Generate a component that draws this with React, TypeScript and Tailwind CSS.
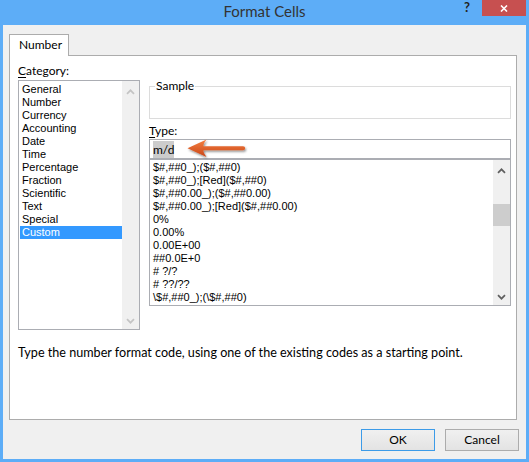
const categories = [
  "General",
  "Number",
  "Currency",
  "Accounting",
  "Date",
  "Time",
  "Percentage",
  "Fraction",
  "Scientific",
  "Text",
  "Special",
  "Custom",
];

const formats = [
  "$#,##0_);($#,##0)",
  "$#,##0_);[Red]($#,##0)",
  "$#,##0.00_);($#,##0.00)",
  "$#,##0.00_);[Red]($#,##0.00)",
  "0%",
  "0.00%",
  "0.00E+00",
  "##0.0E+0",
  "# ?/?",
  "# ??/??",
  "\\$#,##0_);(\\$#,##0)",
];

function Chevron({ down, color }: { down?: boolean; color: string }) {
  return (
    <svg width="9" height="6" viewBox="0 0 9 6">
      <path
        d={down ? "M1 1.2 L4.5 4.7 L8 1.2" : "M1 4.8 L4.5 1.3 L8 4.8"}
        fill="none"
        stroke={color}
        strokeWidth="1.7"
      />
    </svg>
  );
}

function ScrollBar({ disabled, thumb }: { disabled?: boolean; thumb?: boolean }) {
  const color = disabled ? "#C4C4C4" : "#606060";
  return (
    <div className="w-[17px] shrink-0 bg-[#F0F0F0] flex flex-col">
      <div className="h-[17px] flex items-center justify-center pt-[4px]">
        <Chevron color={color} />
      </div>
      <div className="flex-1">
        {thumb && <div className="mt-[27px] h-[22px] bg-[#CDCDCD]" />}
      </div>
      <div className="h-[17px] flex items-center justify-center">
        <Chevron down color={color} />
      </div>
    </div>
  );
}

function PointerArrow() {
  return (
    <svg
      className="absolute left-[34px] top-[-4px]"
      width="66"
      height="26"
      viewBox="0 0 66 26"
    >
      <defs>
        <linearGradient id="arrowFill" x1="0" y1="0" x2="0" y2="1">
          <stop offset="0" stopColor="#F5803F" />
          <stop offset="1" stopColor="#C9461A" />
        </linearGradient>
        <filter id="arrowShadow" x="-20%" y="-40%" width="140%" height="180%">
          <feDropShadow dx="1" dy="1.5" stdDeviation="1.3" floodColor="#000" floodOpacity="0.45" />
        </filter>
      </defs>
      <path
        d="M3.5 12.2 L22.5 3.5 Q19 8 19.5 10.2 L59 10.2 Q61.2 10.2 61.2 12.2 Q61.2 14.3 59 14.3 L19.5 14.3 Q19 16.5 22.5 21 Z"
        fill="url(#arrowFill)"
        filter="url(#arrowShadow)"
      />
    </svg>
  );
}

function Accel({ k, rest }: { k: string; rest: string }) {
  return (
    <span>
      <span className="underline underline-offset-[2px]">{k}</span>
      {rest}
    </span>
  );
}

export default function App() {
  return (
    <div className="w-[529px] h-[462px] bg-[#5DADF7] flex flex-col font-['Lato','Noto_Sans',sans-serif] text-[12px] text-black">
      {/* caption */}
      <div className="relative h-[25px] shrink-0 flex items-center justify-center pb-[3px]">
        <span className="text-[15px] text-[#333]">Format Cells</span>
        <span className="absolute left-[464px] top-[0px] text-[13px] leading-[14px] font-bold text-[#222]">?</span>
        <div className="absolute left-[482px] top-0 w-[44px] h-[16px] bg-[#C75050] flex items-center justify-center">
          <svg width="8" height="7" viewBox="0 0 8 7">
            <path d="M1 0.5 L7 6.5 M7 0.5 L1 6.5" stroke="#fff" strokeWidth="1.6" />
          </svg>
        </div>
      </div>

      {/* client area */}
      <div className="flex-1 mx-[3px] mb-[3px] bg-[#F0F0F0] flex flex-col pt-[9px] pl-[6px] pr-[9px]">
        <div className="relative z-10 -mb-px w-[60px] h-[22px] bg-white border border-b-0 border-[#ACACAC] pl-[9px] leading-[20px]">
          Number
        </div>

        <div className="h-[365px] bg-white border border-[#ACACAC] pt-[8px] pl-[8px] pr-[5px] flex flex-col">
          <div className="flex gap-[9px]">
            {/* category column */}
            <div className="w-[122px] flex flex-col">
              <div className="h-[14px] leading-[14px]">
                <Accel k="C" rest="ategory:" />
              </div>
              <div className="mt-[2px] h-[250px] border border-[#ABADB3] flex">
                <div className="flex-1 pt-[2px] pl-[1px] font-['Liberation_Sans',Arial,sans-serif] text-[11px]">
                  {categories.map((c) => (
                    <div
                      key={c}
                      className={
                        c === "Custom"
                          ? "h-[13px] leading-[13px] pl-[2px] bg-[#3399FF] text-white"
                          : "h-[13px] leading-[13px] pl-[2px]"
                      }
                    >
                      {c}
                    </div>
                  ))}
                </div>
                <ScrollBar disabled />
              </div>
            </div>

            {/* type column */}
            <div className="w-[362px] flex flex-col">
              <div className="relative mt-[22px] h-[33px] border border-[#DCDCDC]">
                <span className="absolute left-[5px] top-[-8px] px-[1px] bg-white leading-[13px]">Sample</span>
              </div>
              <div className="mt-[5px] h-[13px] leading-[13px]">
                <Accel k="T" rest="ype:" />
              </div>
              <div className="relative mt-[2px] h-[20px] border border-[#ABADB3] bg-white pl-[3px] flex items-center">
                <span className="h-[17px] leading-[17px] bg-[#CCCCCC]">m/d</span>
                <PointerArrow />
              </div>
              <div className="h-[147px] border border-[#ABADB3] bg-white flex">
                <div className="flex-1 pt-[1px] pl-[3px] font-['Liberation_Sans',Arial,sans-serif] text-[11px]">
                  {formats.map((f) => (
                    <div key={f} className="h-[13px] leading-[13px] whitespace-nowrap">
                      {f}
                    </div>
                  ))}
                </div>
                <ScrollBar thumb />
              </div>
            </div>
          </div>

          <p className="mt-[16px] leading-[14px] text-[12.6px]">
            Type the number format code, using one of the existing codes as a starting point.
          </p>
        </div>

        <div className="flex justify-end gap-[10px] mt-[9px] -mr-[2px]">
          <button className="w-[74px] h-[22px] border border-[#3C9BE8] bg-linear-to-b from-[#F0F0F0] to-[#E3E3E3] leading-[20px]">
            OK
          </button>
          <button className="w-[74px] h-[22px] border border-[#ACACAC] bg-linear-to-b from-[#F0F0F0] to-[#E3E3E3] leading-[20px]">
            Cancel
          </button>
        </div>
      </div>
    </div>
  );
}
